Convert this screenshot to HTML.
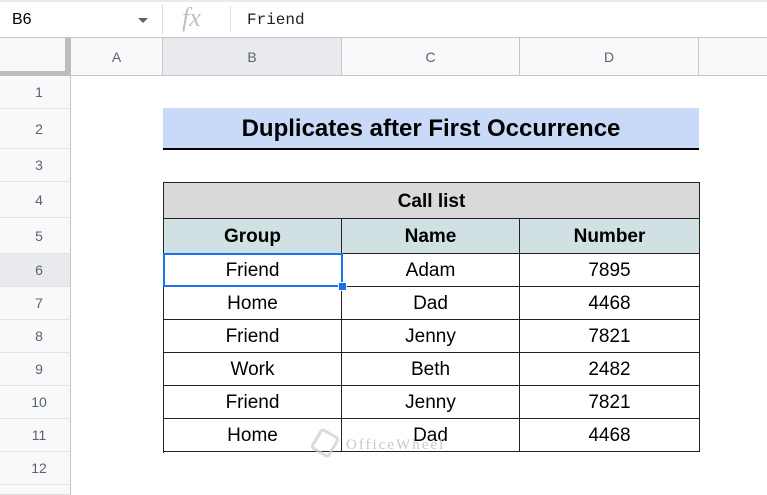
<!DOCTYPE html>
<html><head><style>
*{margin:0;padding:0;box-sizing:border-box}
body{width:767px;height:487px;overflow:hidden;background:#fff;font-family:"Liberation Sans",Arial,sans-serif;position:relative}
.a{position:absolute}
.rh{position:absolute;left:0;width:71px;background:#f8f9fa;border-right:1px solid #c4c7c5;border-bottom:1px solid #e1e3e1;color:#5f6368;font-size:14px;display:flex;align-items:center;justify-content:center;padding-left:8px}
.ch{position:absolute;top:38px;height:38px;background:#f8f9fa;border-right:1px solid #c4c7c5;border-bottom:1px solid #c4c7c5;color:#5f6368;font-size:14px;display:flex;align-items:center;justify-content:center}
.c{position:absolute;display:flex;align-items:center;justify-content:center;font-size:19px;color:#000;border-right:1px solid #222;border-bottom:1px solid #222;padding-top:2px}
</style></head><body>
<div class="a" style="left:0;top:0;width:767px;height:2px;background:#e8eaed"></div>
<div class="a" style="left:12px;top:11px;font-size:16px;color:#000">B6</div>
<div class="a" style="left:138px;top:18px;width:0;height:0;border-left:5px solid transparent;border-right:5px solid transparent;border-top:5px solid #5f6368"></div>
<div class="a" style="left:162px;top:4px;width:1px;height:30px;background:#dadce0"></div>
<div class="a" style="left:182px;top:3px;font-family:'Liberation Serif',serif;font-style:italic;font-size:26px;color:#bdc1c6">fx</div>
<div class="a" style="left:230px;top:6px;width:1px;height:26px;background:#dadce0"></div>
<div class="a" style="left:247px;top:11px;font-family:'Liberation Mono',monospace;font-size:16px;color:#222">Friend</div>
<div class="a" style="left:0;top:37px;width:767px;height:1px;background:#c4c7c5"></div>
<div class="a" style="left:0;top:38px;width:71px;height:38px;background:#f8f9fa;border-right:6px solid #bdbdbd;border-bottom:5px solid #bdbdbd"></div>
<div class="ch" style="left:71px;width:92px">A</div>
<div class="ch" style="left:163px;width:179px;background:#e8eaed">B</div>
<div class="ch" style="left:342px;width:178px">C</div>
<div class="ch" style="left:520px;width:179px">D</div>
<div class="ch" style="left:699px;width:68px;border-right:none"></div>
<div class="rh" style="top:76px;height:33px">1</div>
<div class="rh" style="top:109px;height:40px">2</div>
<div class="rh" style="top:149px;height:33px">3</div>
<div class="rh" style="top:182px;height:36px">4</div>
<div class="rh" style="top:218px;height:36px">5</div>
<div class="rh" style="top:254px;height:33px;background:#e8eaed">6</div>
<div class="rh" style="top:287px;height:33px">7</div>
<div class="rh" style="top:320px;height:33px">8</div>
<div class="rh" style="top:353px;height:33px">9</div>
<div class="rh" style="top:386px;height:33px">10</div>
<div class="rh" style="top:419px;height:33px">11</div>
<div class="rh" style="top:452px;height:33px">12</div>
<div class="rh" style="top:485px;height:10px"></div>
<div class="a" style="left:163px;top:108px;width:536px;height:42px;background:#c9daf8;border-bottom:2px solid #000;display:flex;align-items:center;justify-content:center;font-weight:bold;font-size:24px;padding-top:2px">Duplicates after First Occurrence</div>
<div class="a" style="left:163px;top:182px;width:537px;height:271px;border-left:1px solid #222;border-top:1px solid #222"></div>
<div class="c" style="left:164px;top:183px;width:536px;height:36px;background:#d9d9d9;font-weight:bold">Call list</div>
<div class="c" style="left:164px;top:219px;width:178px;height:35px;background:#d0e0e3;font-weight:bold">Group</div>
<div class="c" style="left:342px;top:219px;width:178px;height:35px;background:#d0e0e3;font-weight:bold">Name</div>
<div class="c" style="left:520px;top:219px;width:180px;height:35px;background:#d0e0e3;font-weight:bold">Number</div>
<div class="c" style="left:164px;top:254px;width:178px;height:33px">Friend</div><div class="c" style="left:342px;top:254px;width:178px;height:33px">Adam</div><div class="c" style="left:520px;top:254px;width:180px;height:33px">7895</div>
<div class="c" style="left:164px;top:287px;width:178px;height:33px">Home</div><div class="c" style="left:342px;top:287px;width:178px;height:33px">Dad</div><div class="c" style="left:520px;top:287px;width:180px;height:33px">4468</div>
<div class="c" style="left:164px;top:320px;width:178px;height:33px">Friend</div><div class="c" style="left:342px;top:320px;width:178px;height:33px">Jenny</div><div class="c" style="left:520px;top:320px;width:180px;height:33px">7821</div>
<div class="c" style="left:164px;top:353px;width:178px;height:33px">Work</div><div class="c" style="left:342px;top:353px;width:178px;height:33px">Beth</div><div class="c" style="left:520px;top:353px;width:180px;height:33px">2482</div>
<div class="c" style="left:164px;top:386px;width:178px;height:33px">Friend</div><div class="c" style="left:342px;top:386px;width:178px;height:33px">Jenny</div><div class="c" style="left:520px;top:386px;width:180px;height:33px">7821</div>
<div class="c" style="left:164px;top:419px;width:178px;height:33px">Home</div><div class="c" style="left:342px;top:419px;width:178px;height:33px">Dad</div><div class="c" style="left:520px;top:419px;width:180px;height:33px">4468</div>
<div class="a" style="left:163px;top:253px;width:180px;height:34px;border:2px solid #1a73e8"></div>
<div class="a" style="left:338px;top:282px;width:9px;height:9px;background:#1a73e8;border:1px solid #fff"></div>
<div class="a" style="left:314px;top:431px;width:22px;height:24px;border:3px solid #ccc;border-radius:4px;transform:rotate(30deg);opacity:.7"></div>
<div class="a" style="left:346px;top:437px;font-family:'Liberation Serif',serif;font-size:15px;letter-spacing:2px;color:#c8c8c8">OfficeWheel</div>
</body></html>
